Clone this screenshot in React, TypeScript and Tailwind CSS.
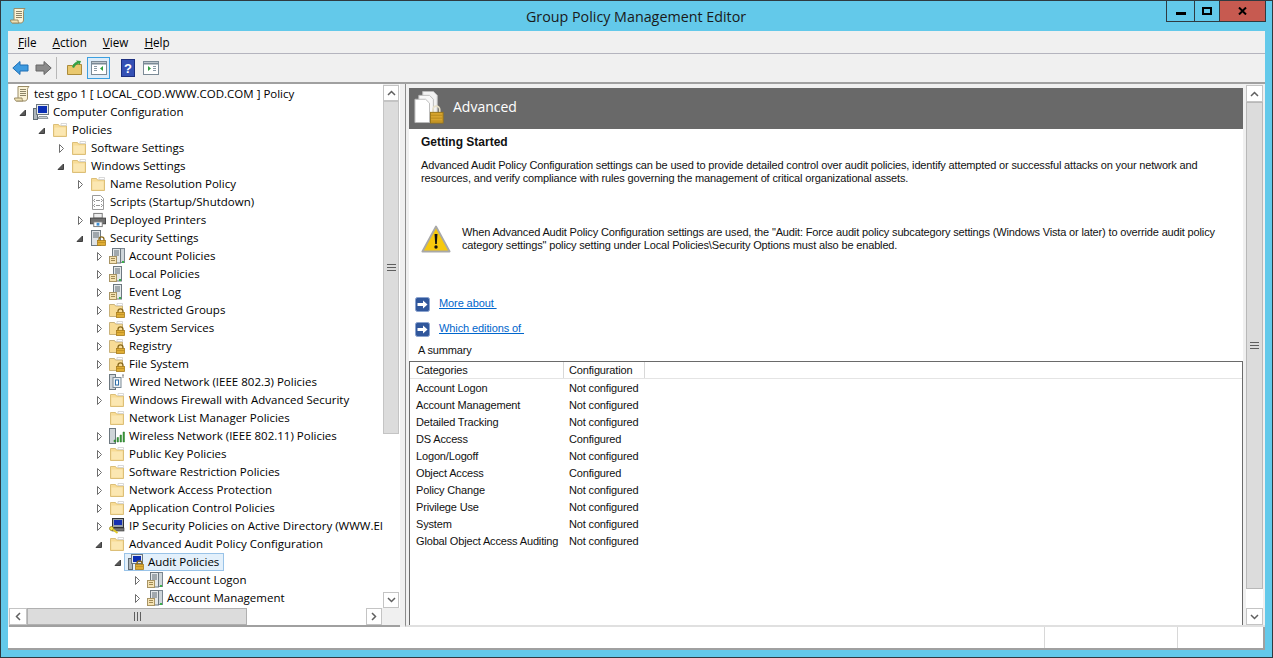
import React from "react";

const Folder = () => (
  <svg width="16" height="16" viewBox="0 0 16 16">
    <path d="M1.500 14.500V2.500h5l1 1.500h7v10.500z" fill="#f8dc96" stroke="#dcbf78" />
    <path d="M2.500 5.500h11v8h-11z" fill="#fbe7b2" />
    <path d="M9 1.500h5.500v2H9z" fill="#fff" stroke="#c9c9c9" strokeWidth="0.7" />
  </svg>
);
const Lock = () => (
  <g>
    <path d="M9 11V9.300a2.500 2.500 0 0 1 5 0V11" fill="none" stroke="#8a6a1e" strokeWidth="1.300" />
    <rect x="7.500" y="10.500" width="8" height="5" fill="#e0ae35" stroke="#a97c1a" strokeWidth="0.800" />
    <path d="M8 12.500h7" stroke="#b98a1f" strokeWidth="0.700" />
  </g>
);
const FolderLock = () => (
  <svg width="16" height="16" viewBox="0 0 16 16">
    <path d="M0.500 14.500V2.500h5l1 1.500h7v10.500z" fill="#f8dc96" stroke="#c9b27a" />
    <path d="M8 1.500h5.500v2H8z" fill="#fff" stroke="#c9c9c9" strokeWidth="0.700" />
    <Lock />
  </svg>
);
const Server = ({ wide = false }: { wide?: boolean }) => (
  <svg width="16" height="16" viewBox="0 0 16 16">
    {wide && <rect x="9.500" y="0.500" width="6" height="14" fill="#cfd6da" stroke="#7b8690" />}
    <rect x={wide ? 3.500 : 4.500} y="0.500" width="8" height="14.500" fill="#e4e8ea" stroke="#6d7880" />
    <path d={wide ? "M5 3h5M5 5h5M5 7h5" : "M6 3h5M6 5h5M6 7h5"} stroke="#5f6a72" />
    <rect x="0.500" y="8.500" width="7" height="7" fill="#f5e2b3" stroke="#a89464" />
    <path d="M2 10.500h4M2 12.500h4" stroke="#a08a55" />
    <rect x={wide ? 13 : 10} y="13" width="2" height="2" fill="#38b04a" />
  </svg>
);
const ServerLock = () => (
  <svg width="16" height="16" viewBox="0 0 16 16">
    <rect x="1.500" y="0.500" width="9" height="15" fill="#dfe3e6" stroke="#6d7880" />
    <path d="M3 3h6M3 5h6M3 7h6" stroke="#5f6a72" />
    <Lock />
  </svg>
);
const Script = () => (
  <svg width="16" height="16" viewBox="0 0 16 16">
    <path d="M4 .5h11c-1 1-1.500 2-1.500 3v8.500c0 1.500-1 3-2.500 3H2.500c1-.5 1.500-1.500 1.500-3z" fill="#fbf3d6" stroke="#9a8c66" />
    <path d="M6 3.500h6M6 5.500h6M6 7.500h6M6 9.500h6" stroke="#8c8568" />
    <path d="M.5 12h7.500c0 1.200.4 2.300 1 3H2.500C1.300 15 .5 13.500.5 12z" fill="#efe2b5" stroke="#9a8c66" />
  </svg>
);
const Scripts = () => (
  <svg width="16" height="16" viewBox="0 0 16 16">
    <path d="M2.500 1.500h8l3 3v11h-11z" fill="#fff" stroke="#9a9a9a" />
    <path d="M5 5l-1.500 1.500L5 8M11 5l1.500 1.500L11 8M6 6.500h4M5 10l-1.500 1.500L5 13M11 10l1.500 1.500L11 13M6 11.500h4" fill="none" stroke="#7a7a7a" strokeWidth="0.800" />
  </svg>
);
const Printer = () => (
  <svg width="17" height="16" viewBox="0 0 17 16">
    <rect x="4" y="1" width="9" height="5" fill="#eee" stroke="#777" />
    <rect x="0.500" y="6" width="16" height="6" fill="#6f6f6f" stroke="#444" />
    <rect x="4" y="10" width="9" height="5" fill="#fff" stroke="#777" />
    <rect x="7" y="11" width="3" height="3" fill="#3c8fd6" />
  </svg>
);
const Wired = () => (
  <svg width="16" height="16" viewBox="0 0 16 16">
    <rect x="0.500" y="0.500" width="6" height="15" fill="#cfd4d8" stroke="#6d7880" />
    <rect x="4" y="3.500" width="8" height="10" fill="#eef1f3" stroke="#7a8a96" />
    <rect x="6.500" y="6" width="3" height="5" fill="#fff" stroke="#2f6fa8" />
    <path d="M13 1h2M14 1v3" stroke="#888" />
  </svg>
);
const Wireless = () => (
  <svg width="16" height="16" viewBox="0 0 16 16">
    <rect x="0.500" y="0.500" width="6" height="15" fill="#cfd4d8" stroke="#6d7880" />
    <path d="M5 14h1.500v-2H5zM8 14h1.500V9.500H8zM11 14h1.500V7H11zM14 14h1.500V4H14z" fill="#3d9b3d" stroke="#2a7a2a" strokeWidth="0.500" />
  </svg>
);
const IPSec = () => (
  <svg width="16" height="16" viewBox="0 0 16 16">
    <rect x="3.500" y="0.500" width="11" height="9" fill="#9aa2a8" stroke="#333" />
    <rect x="5" y="2" width="8" height="5" fill="#1630b0" />
    <rect x="3" y="10" width="12" height="3" fill="#777" stroke="#333" strokeWidth="0.600" />
    <circle cx="2.500" cy="10.500" r="2" fill="#f4e04a" stroke="#8c7a10" strokeWidth="0.700" />
    <path d="M4 11.500l4.500 3.500" stroke="#e0c828" strokeWidth="1.800" />
  </svg>
);
const Computer = () => (
  <svg width="16" height="16" viewBox="0 0 16 16">
    <rect x="0.500" y="4.500" width="4" height="11" fill="#aeb6bc" stroke="#5f6a72" />
    <rect x="3.500" y="0.500" width="12" height="10" fill="#e7ebee" stroke="#6d7880" />
    <rect x="5" y="2" width="9" height="7" fill="#0c2fb4" />
    <path d="M6 12.500h8l1 2H5z" fill="#c9ced2" stroke="#6d7880" strokeWidth="0.700" />
  </svg>
);
const AuditIcon = () => (
  <svg width="16" height="16" viewBox="0 0 16 16">
    <rect x="0.500" y="4.500" width="4" height="11" fill="#aeb6bc" stroke="#5f6a72" />
    <rect x="3.500" y="0.500" width="11" height="9" fill="#e7ebee" stroke="#6d7880" />
    <rect x="5" y="2" width="8" height="6" fill="#0c2fb4" />
    <Lock />
  </svg>
);

const Open = () => (
  <svg width="9" height="9" viewBox="0 0 9 9"><path d="M6.500 2v5.500H1z" fill="#595959" stroke="#404040" /></svg>
);
const Closed = () => (
  <svg width="9" height="11" viewBox="0 0 9 11"><path d="M2.500 1.500l4 4-4 4z" fill="#fff" stroke="#6e6e6e" /></svg>
);

type Row = { l: number; e?: "o" | "c"; i: React.ReactNode; t: string; sel?: boolean };
const rows: Row[] = [
  { l: 0, i: <Script />, t: "test gpo 1 [ LOCAL_COD.WWW.COD.COM ] Policy" },
  { l: 1, e: "o", i: <Computer />, t: "Computer Configuration" },
  { l: 2, e: "o", i: <Folder />, t: "Policies" },
  { l: 3, e: "c", i: <Folder />, t: "Software Settings" },
  { l: 3, e: "o", i: <Folder />, t: "Windows Settings" },
  { l: 4, e: "c", i: <Folder />, t: "Name Resolution Policy" },
  { l: 4, i: <Scripts />, t: "Scripts (Startup/Shutdown)" },
  { l: 4, e: "c", i: <Printer />, t: "Deployed Printers" },
  { l: 4, e: "o", i: <ServerLock />, t: "Security Settings" },
  { l: 5, e: "c", i: <Server wide />, t: "Account Policies" },
  { l: 5, e: "c", i: <Server />, t: "Local Policies" },
  { l: 5, e: "c", i: <Server />, t: "Event Log" },
  { l: 5, e: "c", i: <FolderLock />, t: "Restricted Groups" },
  { l: 5, e: "c", i: <FolderLock />, t: "System Services" },
  { l: 5, e: "c", i: <FolderLock />, t: "Registry" },
  { l: 5, e: "c", i: <FolderLock />, t: "File System" },
  { l: 5, e: "c", i: <Wired />, t: "Wired Network (IEEE 802.3) Policies" },
  { l: 5, e: "c", i: <Folder />, t: "Windows Firewall with Advanced Security" },
  { l: 5, i: <Folder />, t: "Network List Manager Policies" },
  { l: 5, e: "c", i: <Wireless />, t: "Wireless Network (IEEE 802.11) Policies" },
  { l: 5, e: "c", i: <Folder />, t: "Public Key Policies" },
  { l: 5, e: "c", i: <Folder />, t: "Software Restriction Policies" },
  { l: 5, e: "c", i: <Folder />, t: "Network Access Protection" },
  { l: 5, e: "c", i: <Folder />, t: "Application Control Policies" },
  { l: 5, e: "c", i: <IPSec />, t: "IP Security Policies on Active Directory (WWW.EI" },
  { l: 5, e: "o", i: <Folder />, t: "Advanced Audit Policy Configuration" },
  { l: 6, e: "o", i: <AuditIcon />, t: "Audit Policies", sel: true },
  { l: 7, e: "c", i: <Server wide />, t: "Account Logon" },
  { l: 7, e: "c", i: <Server wide />, t: "Account Management" },
];

const indents: Record<number, string> = { 0: "pl-[5px]", 1: "pl-[10px]", 2: "pl-[29px]", 3: "pl-[48px]", 4: "pl-[67px]", 5: "pl-[86px]", 6: "pl-[105px]", 7: "pl-[124px]" };

const TreeRow = ({ r }: { r: Row }) => (
  <div className={`flex h-[18px] items-center whitespace-nowrap ${indents[r.l]}`}>
    {r.l > 0 && <span className="flex w-[14px] shrink-0 items-center justify-start">{r.e === "o" ? <Open /> : r.e === "c" ? <Closed /> : null}</span>}
    <span className={`flex h-[18px] items-center ${r.sel ? "-ml-[4px] border border-[#99c3e8] bg-[#e3f0fb] pl-[3px]" : ""}`}>
      <span className="flex w-[16px] shrink-0 justify-center">{r.i}</span>
      <span className="pl-[4px] pr-[4px] text-[11.5px] leading-[18px] text-[#000]">{r.t}</span>
    </span>
  </div>
);

const Up = () => <svg width="9" height="6" viewBox="0 0 9 6"><path d="M1 5l3.500-3.500L8 5" fill="none" stroke="#606060" strokeWidth="1.500" /></svg>;
const Down = () => <svg width="9" height="6" viewBox="0 0 9 6"><path d="M1 1l3.500 3.500L8 1" fill="none" stroke="#606060" strokeWidth="1.500" /></svg>;
const L = () => <svg width="6" height="9" viewBox="0 0 6 9"><path d="M5 1L1.500 4.500 5 8" fill="none" stroke="#606060" strokeWidth="1.500" /></svg>;
const R = () => <svg width="6" height="9" viewBox="0 0 6 9"><path d="M1 1l3.500 3.500L1 8" fill="none" stroke="#606060" strokeWidth="1.500" /></svg>;
const Grip = () => <svg width="9" height="7" viewBox="0 0 9 7"><path d="M0 .5h9M0 3.500h9M0 6.500h9" stroke="#5f5f5f" /></svg>;
const GripV = () => <svg width="7" height="9" viewBox="0 0 7 9"><path d="M.5 0v9M3.500 0v9M6.500 0v9" stroke="#5f5f5f" /></svg>;

const ArrowLink = ({ t, cls }: { t: string; cls: string }) => (
  <div className={`flex h-[15px] items-center ${cls}`}>
    <svg width="15" height="15" viewBox="0 0 15 15" className="shrink-0">
      <rect x="0.500" y="0.500" width="14" height="14" rx="2" fill="#30579c" stroke="#8aa3cf" />
      <path d="M2.500 6h5.500V3.500L12.500 7.500 8 11.500V9H2.500z" fill="#fff" />
    </svg>
    <a className="-mt-[3px] ml-[9px] text-[11px] leading-[15px] tracking-[-0.1px] text-[#0066cc] underline whitespace-pre">{t}</a>
  </div>
);

const tableRows = [
  ["Account Logon", "Not configured"],
  ["Account Management", "Not configured"],
  ["Detailed Tracking", "Not configured"],
  ["DS Access", "Configured"],
  ["Logon/Logoff", "Not configured"],
  ["Object Access", "Configured"],
  ["Policy Change", "Not configured"],
  ["Privilege Use", "Not configured"],
  ["System", "Not configured"],
  ["Global Object Access Auditing", "Not configured"],
];

export default function App() {
  return (
    <div className="flex h-[658px] w-[1273px] flex-col overflow-hidden border border-[#2f3a40] bg-[#63c9ea] font-['Open_Sans','Noto_Sans',sans-serif] text-black">
      <div className="flex h-[30px] shrink-0 items-start">
        <div className="flex w-[524px] pl-[9px] pt-[7px]"><Script /></div>
        <div className="w-[222px] pt-[6px] text-center text-[14.3px] leading-[20px] whitespace-nowrap text-[#1a1a1a]">Group Policy Management Editor</div>
        <div className="flex-1" />
        <div className="mr-[6px] flex h-[21px] border-x border-b border-[#2f3a40]">
          <div className="flex w-[28px] items-center justify-center border-r border-[#2f3a40]"><div className="mt-[4px] h-[3px] w-[10px] bg-black" /></div>
          <div className="flex w-[25px] items-center justify-center border-r border-[#2f3a40]"><div className="h-[8px] w-[10px] border-2 border-black" /></div>
          <div className="flex w-[45px] items-center justify-center bg-[#c75a50]">
            <svg width="9" height="8" viewBox="0 0 9 8"><path d="M1 .5l7 7M8 .5l-7 7" stroke="#000" strokeWidth="2" /></svg>
          </div>
        </div>
      </div>

      <div className="mx-[7px] flex h-[619px] shrink-0 flex-col bg-[#f0f0f0]">
        <div className="flex h-[23px] shrink-0 items-center gap-[16px] border-b border-[#b4b4be] pl-[10px] text-[11.7px] leading-[18px]">
          <span><u>F</u>ile</span>
          <span><u>A</u>ction</span>
          <span><u>V</u>iew</span>
          <span><u>H</u>elp</span>
        </div>
        <div className="flex h-[30px] shrink-0 items-center border-b-2 border-[#a0a0a0] pl-[4px]">
          <svg width="17" height="14" viewBox="0 0 17 14"><path d="M8 .5v3.500h8v6H8v3.500L.8 7z" fill="#3e9be0" stroke="#1f6fb5" /></svg>
          <svg width="17" height="14" viewBox="0 0 17 14" className="ml-[6px]"><path d="M9 .5v3.500H1v6h8v3.500L16.200 7z" fill="#8a8a8a" stroke="#666" /></svg>
          <div className="ml-[4px] mr-[5px] h-[22px] w-px bg-[#b8b8b8]" />
          <div className="ml-[5px]"><svg width="16" height="16" viewBox="0 0 16 16"><path d="M.5 14.500V5.500h5l1-1h8v10z" fill="#e9c86e" stroke="#ab8b3a" /><path d="M5 7c1-3 3-5 5-5l-1-1.500L14 1l-1.500 4L11.500 3.500C9.500 4 8 6 7 8z" fill="#35a045" /></svg></div>
          <div className="ml-[4px] flex h-[22px] w-[23px] items-center justify-center border border-[#3c9fe0] bg-[#dcecf9]">
            <svg width="16" height="14" viewBox="0 0 16 14"><rect x=".5" y=".5" width="15" height="13" fill="#fff" stroke="#7b8a96" /><path d="M.5 2.500h15" stroke="#7b8a96" strokeWidth="2" /><path d="M3 5.500h3M3 7.500h3M3 9.500h3" stroke="#8a9aa6" /><path d="M12 5v5L9 7.500z" fill="#2e9e3e" /></svg>
          </div>
          <div className="ml-[11px]"><svg width="14" height="18" viewBox="0 0 14 18"><rect x=".5" y=".5" width="13" height="17" fill="#3450b4" stroke="#1d2f80" /><text x="7" y="14" textAnchor="middle" fontSize="13" fontWeight="700" fill="#fff" fontFamily="Liberation Sans">?</text></svg></div>
          <div className="ml-[8px]"><svg width="16" height="14" viewBox="0 0 16 14"><rect x=".5" y=".5" width="15" height="13" fill="#fff" stroke="#7b8a96" /><path d="M.5 2.500h15" stroke="#7b8a96" strokeWidth="2" /><path d="M10 5.500h3M10 7.500h3M10 9.500h3" stroke="#8a9aa6" /><path d="M5 5v5l3-2.500z" fill="#2e9e3e" /></svg></div>
        </div>

        <div className="flex h-[543px] shrink-0 pl-px">
          <div className="flex h-[543px] w-[391px] shrink-0 flex-col border-b-2 border-[#a0a0a0] bg-white">
            <div className="flex h-[524px] min-h-0">
              <div className="h-[524px] w-[374px] overflow-hidden pt-[1px]">
                {rows.map((r) => <TreeRow key={r.t} r={r} />)}
              </div>
              <div className="flex w-[16px] shrink-0 flex-col bg-[#f0f0f0] pt-[1px]">
                <div className="flex h-[16px] shrink-0 items-center justify-center border border-[#c4c4c4] bg-white"><Up /></div>
                <div className="flex flex-1 flex-col">
                  <div className="flex h-[333px] items-center justify-center border border-[#c4c4c4] bg-[#dcdcdc]"><Grip /></div>
                  <div className="flex-1 bg-white" />
                </div>
                <div className="flex h-[16px] shrink-0 items-center justify-center border border-[#c4c4c4] bg-white"><Down /></div>
              </div>
            </div>
            <div className="flex h-[17px] shrink-0 bg-[#f0f0f0]">
              <div className="flex w-[18px] items-center justify-center border border-[#c4c4c4] bg-white"><L /></div>
              <div className="flex w-[220px] items-center justify-center border border-[#b0b0b0] bg-[#dcdcdc]"><GripV /></div>
              <div className="w-[119px] bg-white" />
              <div className="flex w-[16px] items-center justify-center border border-[#c4c4c4] bg-white"><R /></div>
            </div>
          </div>

          <div className="w-[5px] shrink-0" />

          <div className="flex h-[543px] min-w-0 flex-1 border-b-2 border-l border-l-[#8c8c8c] border-b-[#e0e0e0] bg-[#f0f0f0] pt-[4px] pl-[3px]">
            <div className="flex w-[834px] shrink-0 flex-col bg-white">
              <div className="flex h-[41px] w-[834px] shrink-0 items-start bg-[#696969] pl-[5px] pt-[3px]">
                <svg width="31" height="33" viewBox="0 0 31 34">
                  <path d="M8.500 .5h11l4 4v18h-15z" fill="#f2f2f2" stroke="#bbb" />
                  <path d="M4.500 4.500h11l4 4v18h-15z" fill="#f8f8f8" stroke="#bbb" />
                  <path d="M.5 8.500h11l4 4v20h-15z" fill="#fff" stroke="#bbb" />
                  <path d="M19 22v-3a3.500 3.500 0 0 1 7 0v3" fill="none" stroke="#e7e0c8" strokeWidth="1.800" />
                  <rect x="16.500" y="22" width="13" height="11" fill="#d7a52f" stroke="#9a7618" />
                  <path d="M17 25h12M17 28h12M17 31h12" stroke="#b98a1f" />
                </svg>
                <span className="ml-[8px] mt-[6px] text-[14px] leading-[20px] text-white">Advanced</span>
              </div>
              <div className="flex flex-col font-['Liberation_Sans',sans-serif] text-[11px] leading-[13px] tracking-[-0.155px] text-[#111]">
                <div className="ml-[12px] mt-[6px] h-[14px] text-[12px] leading-[14px] tracking-normal font-bold">Getting Started</div>
                <div className="ml-[12px] mt-[10px] whitespace-nowrap">
                  Advanced Audit Policy Configuration settings can be used to provide detailed control over audit policies, identify attempted or successful attacks on your network and<br />resources, and verify compliance with rules governing the management of critical organizational assets.
                </div>
                <div className="ml-[12px] mt-[38px] flex h-[32px] items-center">
                  <svg width="30" height="28" viewBox="0 0 32 28" className="shrink-0" preserveAspectRatio="none">
                    <path d="M16 1.500L30.500 26.500H1.500z" fill="#f6c90e" stroke="#a8a8a8" strokeWidth="2" strokeLinejoin="round" />
                    <path d="M14.500 9h3l-.6 10h-1.800z" fill="#111" />
                    <circle cx="16" cy="22" r="1.800" fill="#111" />
                  </svg>
                  <div className="ml-[11px] whitespace-nowrap">
                    When Advanced Audit Policy Configuration settings are used, the &quot;Audit: Force audit policy subcategory settings (Windows Vista or later) to override audit policy<br />category settings&quot; policy setting under Local Policies\Security Options must also be enabled.
                  </div>
                </div>
                <ArrowLink t="More about " cls="ml-[6px] mt-[42px]" />
                <ArrowLink t="Which editions of " cls="ml-[6px] mt-[10px]" />
                <div className="ml-[9px] mt-[6px] h-[14px] leading-[14px]">A summary</div>
              </div>
              <div className="mt-[4px] flex min-h-0 flex-1 flex-col border-x border-t border-[#6a6a6a] font-['Liberation_Sans',sans-serif] text-[11px] tracking-[-0.155px] text-[#111]">
                <div className="mb-[1px] flex h-[17px] shrink-0 border-b border-[#e4e4e4] leading-[17px]">
                  <div className="w-[154px] border-r border-[#d8d8d8] pl-[6px]">Categories</div>
                  <div className="w-[81px] border-r border-[#d8d8d8] pl-[5px]">Configuration</div>
                </div>
                {tableRows.map(([a, b]) => (
                  <div key={a} className="flex h-[17px] shrink-0 leading-[17px]">
                    <div className="w-[154px] whitespace-nowrap pl-[6px]">{a}</div>
                    <div className="pl-[5px] whitespace-nowrap">{b}</div>
                  </div>
                ))}
              </div>
            </div>
            <div className="ml-[3px] -mt-[3px] flex w-[17px] shrink-0 flex-col">
              <div className="flex h-[17px] shrink-0 items-center justify-center border border-[#c4c4c4] bg-white"><Up /></div>
              <div className="flex flex-1 flex-col">
                <div className="flex h-[487px] items-center justify-center border border-[#b8b8b8] bg-[#dcdcdc]"><Grip /></div>
                <div className="flex-1 bg-white" />
              </div>
              <div className="flex h-[17px] shrink-0 items-center justify-center border border-[#c4c4c4] bg-white"><Down /></div>
            </div>
          </div>
        </div>

        <div className="flex h-[23px] shrink-0 border-r-2 border-b-2 border-[#a0a0a0] bg-white">
          <div className="w-[1037px] border-r border-[#d8d8d8]" />
          <div className="w-[133px] border-r border-[#d8d8d8]" />
          <div className="flex-1" />
        </div>
      </div>
    </div>
  );
}
